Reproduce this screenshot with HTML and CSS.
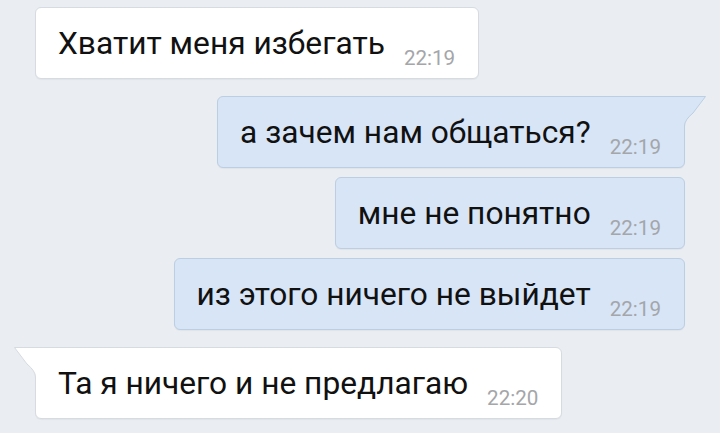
FILE: index.html
```html
<!DOCTYPE html>
<html lang="ru">
<head>
  <meta charset="UTF-8">
  <meta name="viewport" content="width=device-width, initial-scale=1.0">
  <title>Сообщения</title>
  <link rel="stylesheet" href="styles.css">
</head>
<body>
  <div class="chat">
    <div class="msg in">
      <span class="text">Хватит меня избегать</span>
      <span class="time">22:19</span>
    </div>

    <div class="group">
      <div class="msg out tailed">
        <span class="text">а зачем нам общаться?</span>
        <span class="time">22:19</span>
        <svg class="tail" width="26" height="32" viewBox="0 0 26 32">
          <path class="tail-fill" d="M0 0.5 H25.5 L13 17 Q4.5 24 4.5 30 V32 H0 Z"/>
          <path class="tail-line" d="M0 0.5 H25.5 L13 17 Q4.5 24 4.5 30 V32"/>
        </svg>
      </div>
      <div class="msg out">
        <span class="text">мне не понятно</span>
        <span class="time">22:19</span>
      </div>
      <div class="msg out">
        <span class="text">из этого ничего не выйдет</span>
        <span class="time">22:19</span>
      </div>
    </div>

    <div class="msg in tailed">
      <span class="text">Та я ничего и не предлагаю</span>
      <span class="time">22:20</span>
      <svg class="tail" width="26" height="32" viewBox="0 0 26 32">
        <path class="tail-fill" d="M0 0.5 H25.5 L13 17 Q4.5 24 4.5 30 V32 H0 Z"/>
        <path class="tail-line" d="M0 0.5 H25.5 L13 17 Q4.5 24 4.5 30 V32"/>
      </svg>
    </div>
  </div>
</body>
</html>
```

FILE: styles.css
```css
body {
  margin: 0;
  background: #eaedf1;
  font-family: Roboto, "Noto Sans", Arial, sans-serif;
  width: 720px;
  height: 433px;
  overflow: hidden;
}

.chat {
  display: flex;
  flex-direction: column;
  gap: 17px;
  padding: 7px 35px 0 35px;
}

.group {
  display: flex;
  flex-direction: column;
  align-items: flex-end;
  gap: 9px;
}

.msg {
  position: relative;
  display: flex;
  height: 72px;
  box-sizing: border-box;
  padding: 16px 23px 0 22px;
  border: 1px solid #d6dbe1;
  border-radius: 6px;
  box-shadow: 0 1px 1px rgba(0, 0, 0, 0.04);
}

.msg.in {
  align-self: flex-start;
  background: #ffffff;
}

.msg.out {
  align-self: flex-end;
  background: #d7e5f7;
  border-color: #bccee2;
}

.text {
  font-size: 31.7px;
  line-height: 40px;
  color: #111111;
  white-space: nowrap;
}

.time {
  align-self: flex-end;
  margin: 0 0 10px 19px;
  font-size: 20.6px;
  line-height: 20px;
  color: #a4a6a9;
}

/* tail on the first outgoing / last incoming bubble */
.tail {
  position: absolute;
  top: -1px;
}

.tail-fill {
  stroke: none;
}

.tail-line {
  fill: none;
  stroke-width: 1;
}

.msg.out.tailed {
  border-top-right-radius: 0;
}

.msg.out .tail {
  left: calc(100% - 4px);
}

.msg.out .tail-fill {
  fill: #d7e5f7;
}

.msg.out .tail-line {
  stroke: #bccee2;
}

.msg.in.tailed {
  border-top-left-radius: 0;
}

.msg.in .tail {
  right: calc(100% - 4px);
  transform: scaleX(-1);
}

.msg.in .tail-fill {
  fill: #ffffff;
}

.msg.in .tail-line {
  stroke: #d6dbe1;
}
```
